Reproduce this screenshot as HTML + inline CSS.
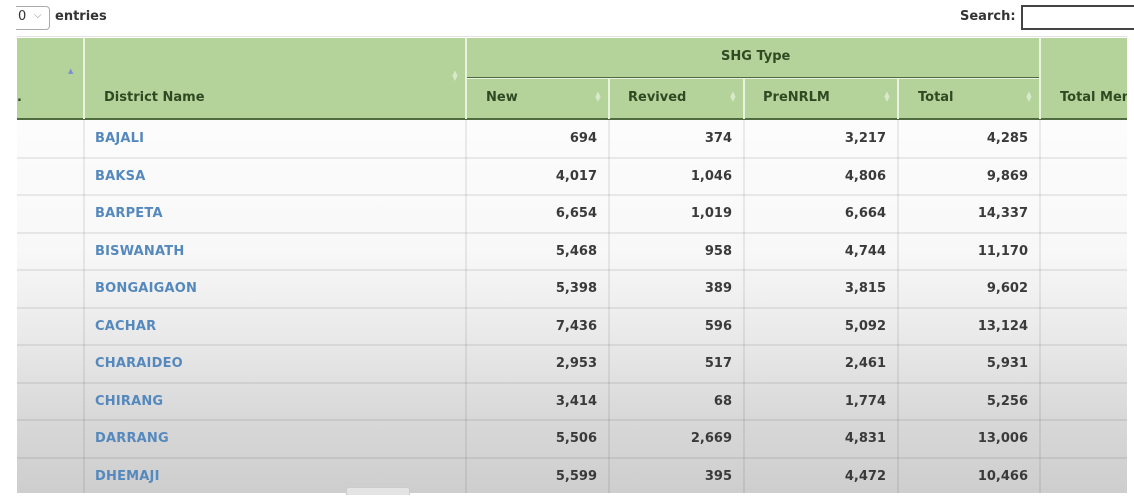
<!DOCTYPE html>
<html><head><style>
*{margin:0;padding:0;box-sizing:border-box}
body{width:1134px;height:500px;overflow:hidden;background:#fff;font-family:"DejaVu Sans","Liberation Sans",sans-serif;position:relative}
.a{position:absolute}
.top{font-size:13px;font-weight:bold;color:#333}
.hd{background:#b4d39a;color:#2f4a22;font-weight:bold;font-size:13px}
.cell{position:absolute;display:flex;align-items:center}
.num{justify-content:flex-end;padding-right:12px;font-size:13px;font-weight:bold;color:#3a3a3a}
.dn{padding-left:11px;font-size:13px;font-weight:bold;color:#5589bd;letter-spacing:.2px}
.sort{position:absolute;width:6px;height:10px;color:#d8e8cb;font-size:7px;line-height:5px;text-align:center}
</style></head><body>
<div class="a" style="left:16px;top:6px;width:34px;height:24px;border:1px solid #aaa;border-left:none;border-radius:0 4px 4px 0"></div>
<div class="a top" style="left:18px;top:9px;font-weight:normal">0</div>
<div class="a" style="left:34px;top:10px;font-size:10px;color:#888">⌵</div>
<div class="a top" style="left:55px;top:9px">entries</div>
<div class="a top" style="left:960px;top:9px">Search:</div>
<div class="a" style="left:1021px;top:5px;width:120px;height:25px;border:2px solid #444;border-right:none"></div>

<div class="a" style="left:17px;top:36px;width:1110px;height:1px;background:#e3e3e3"></div>
<div class="a hd" style="left:17px;top:38px;width:1110px;height:81px"></div>
<div class="a" style="left:17px;top:118px;width:1110px;height:2px;background:#4f6b3f"></div>
<div class="a" style="left:466px;top:77px;width:574px;height:1px;background:#4f6b3f"></div>
<div class="a" style="left:466px;top:78px;width:574px;height:1px;background:#e8f2df"></div>
<div class="a" style="left:83px;top:38px;width:2px;height:81px;background:#e8f2df"></div>
<div class="a" style="left:465px;top:38px;width:2px;height:81px;background:#e8f2df"></div>
<div class="a" style="left:608px;top:78px;width:2px;height:41px;background:#e8f2df"></div>
<div class="a" style="left:743px;top:78px;width:2px;height:41px;background:#e8f2df"></div>
<div class="a" style="left:897px;top:78px;width:2px;height:41px;background:#e8f2df"></div>
<div class="a" style="left:1039px;top:38px;width:2px;height:81px;background:#e8f2df"></div>

<div class="a hd" style="left:17px;top:90px">.</div>
<div class="a" style="left:68px;top:67px;font-size:7px;color:#7a8fd0">▲</div>
<div class="a hd" style="left:104px;top:90px">District Name</div>
<div class="sort" style="left:452px;top:71px">▲<br>▼</div>
<div class="a hd" style="left:721px;top:49px">SHG Type</div>
<div class="a hd" style="left:486px;top:90px">New</div>
<div class="sort" style="left:595px;top:92px">▲<br>▼</div>
<div class="a hd" style="left:628px;top:90px">Revived</div>
<div class="sort" style="left:730px;top:92px">▲<br>▼</div>
<div class="a hd" style="left:763px;top:90px">PreNRLM</div>
<div class="sort" style="left:884px;top:92px">▲<br>▼</div>
<div class="a hd" style="left:918px;top:90px">Total</div>
<div class="sort" style="left:1026px;top:92px">▲<br>▼</div>
<div class="a hd" style="left:1060px;top:90px;white-space:nowrap;width:67px;overflow:hidden">Total Mem</div>

<div class="a" id="body" style="left:17px;top:120px;width:1110px;height:373px;background:linear-gradient(#fcfcfc,#f8f8f8 35%,#e8e8e8 60%,#d8d8d8 80%,#cecece)"></div>
<div id="rows"></div>
<div class="a" style="left:346px;top:487px;width:64px;height:8px;background:#e4e4e4;border:1px solid #ccc;border-bottom:none;border-radius:3px 3px 0 0"></div>
<script>
var d=[["BAJALI","694","374","3,217","4,285"],["BAKSA","4,017","1,046","4,806","9,869"],["BARPETA","6,654","1,019","6,664","14,337"],["BISWANATH","5,468","958","4,744","11,170"],["BONGAIGAON","5,398","389","3,815","9,602"],["CACHAR","7,436","596","5,092","13,124"],["CHARAIDEO","2,953","517","2,461","5,931"],["CHIRANG","3,414","68","1,774","5,256"],["DARRANG","5,506","2,669","4,831","13,006"],["DHEMAJI","5,599","395","4,472","10,466"]];
var c=[84,466,609,744,898,1040],h="";
for(var i=0;i<10;i++){var t=120+i*37.5;
if(i>0)h+='<div class="a" style="left:17px;top:'+(t-1)+'px;width:1110px;height:2px;background:rgba(0,0,0,.07)"></div>';
h+='<div class="cell dn" style="left:84px;top:'+t+'px;width:382px;height:37px">'+d[i][0]+'</div>';
for(var j=1;j<5;j++)h+='<div class="cell num" style="left:'+c[j]+'px;top:'+t+'px;width:'+(c[j+1]-c[j])+'px;height:37px">'+d[i][j]+'</div>';}
for(var k=0;k<c.length;k++)h+='<div class="a" style="left:'+(c[k]-1)+'px;top:120px;width:2px;height:373px;background:rgba(0,0,0,.07)"></div>';
document.getElementById("rows").innerHTML=h;
</script>
</body></html>
